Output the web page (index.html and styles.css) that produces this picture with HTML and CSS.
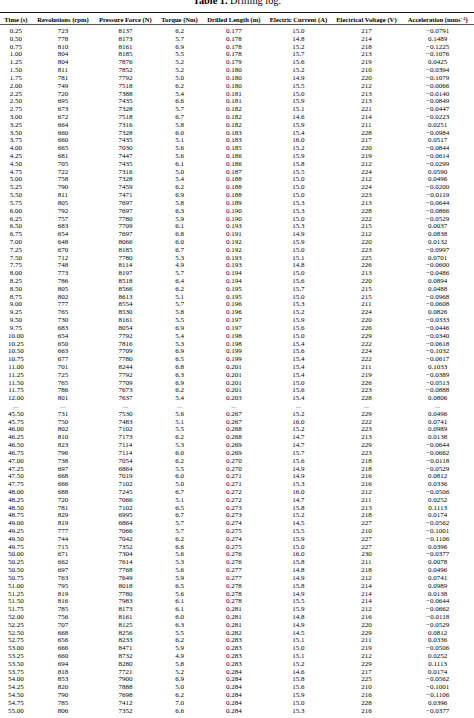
FILE: index.html
```html
<!DOCTYPE html>
<html>
<head>
<meta charset="utf-8">
<link rel="stylesheet" href="styles.css">
</head>
<body>
<div class="caption"><b>Table 1.</b> Drilling log.</div>
<table class="log">
<colgroup>
<col class="c1"><col class="c2"><col class="c3"><col class="c4"><col class="c5"><col class="c6"><col class="c7"><col class="c8">
</colgroup>
<thead>
<tr><th>Time (s)</th><th>Revolutions (rpm)</th><th>Pressure Force (N)</th><th>Torque (Nm)</th><th>Drilled Length (m)</th><th>Electric Current (A)</th><th>Electrical Voltage (V)</th><th>Acceleration (mms<sup>−2</sup>)</th></tr>
</thead>
<tbody>
<tr><td>0.25</td><td>723</td><td>8137</td><td>6.2</td><td>0.177</td><td>15.0</td><td>217</td><td>−0.0791</td></tr>
<tr><td>0.50</td><td>778</td><td>8173</td><td>5.7</td><td>0.178</td><td>14.8</td><td>214</td><td>0.1489</td></tr>
<tr><td>0.75</td><td>810</td><td>8161</td><td>6.9</td><td>0.178</td><td>15.2</td><td>218</td><td>−0.1225</td></tr>
<tr><td>1.00</td><td>804</td><td>8185</td><td>5.5</td><td>0.178</td><td>15.7</td><td>213</td><td>−0.1076</td></tr>
<tr><td>1.25</td><td>804</td><td>7876</td><td>5.2</td><td>0.179</td><td>15.6</td><td>219</td><td>0.0425</td></tr>
<tr><td>1.50</td><td>811</td><td>7852</td><td>5.2</td><td>0.180</td><td>15.2</td><td>210</td><td>−0.0394</td></tr>
<tr><td>1.75</td><td>781</td><td>7792</td><td>5.0</td><td>0.180</td><td>14.9</td><td>220</td><td>−0.1079</td></tr>
<tr><td>2.00</td><td>749</td><td>7518</td><td>6.2</td><td>0.180</td><td>15.5</td><td>212</td><td>−0.0066</td></tr>
<tr><td>2.25</td><td>720</td><td>7388</td><td>5.4</td><td>0.181</td><td>15.0</td><td>213</td><td>−0.0140</td></tr>
<tr><td>2.50</td><td>695</td><td>7435</td><td>6.6</td><td>0.181</td><td>15.9</td><td>213</td><td>−0.0849</td></tr>
<tr><td>2.75</td><td>673</td><td>7328</td><td>5.7</td><td>0.182</td><td>15.1</td><td>221</td><td>−0.0447</td></tr>
<tr><td>3.00</td><td>672</td><td>7518</td><td>6.7</td><td>0.182</td><td>14.6</td><td>214</td><td>−0.0223</td></tr>
<tr><td>3.25</td><td>664</td><td>7316</td><td>5.8</td><td>0.182</td><td>15.9</td><td>211</td><td>0.0251</td></tr>
<tr><td>3.50</td><td>660</td><td>7328</td><td>6.0</td><td>0.183</td><td>15.4</td><td>228</td><td>−0.0984</td></tr>
<tr><td>3.75</td><td>660</td><td>7435</td><td>5.1</td><td>0.183</td><td>16.0</td><td>217</td><td>0.0517</td></tr>
<tr><td>4.00</td><td>665</td><td>7030</td><td>5.6</td><td>0.185</td><td>15.2</td><td>220</td><td>−0.0844</td></tr>
<tr><td>4.25</td><td>681</td><td>7447</td><td>5.6</td><td>0.186</td><td>15.9</td><td>219</td><td>−0.0614</td></tr>
<tr><td>4.50</td><td>705</td><td>7435</td><td>6.1</td><td>0.186</td><td>15.8</td><td>212</td><td>−0.0299</td></tr>
<tr><td>4.75</td><td>722</td><td>7316</td><td>5.0</td><td>0.187</td><td>15.5</td><td>224</td><td>0.0590</td></tr>
<tr><td>5.00</td><td>758</td><td>7328</td><td>5.4</td><td>0.188</td><td>15.0</td><td>212</td><td>0.0496</td></tr>
<tr><td>5.25</td><td>790</td><td>7459</td><td>6.2</td><td>0.188</td><td>15.0</td><td>224</td><td>−0.0200</td></tr>
<tr><td>5.50</td><td>811</td><td>7471</td><td>6.9</td><td>0.188</td><td>15.0</td><td>223</td><td>−0.0119</td></tr>
<tr><td>5.75</td><td>805</td><td>7697</td><td>5.8</td><td>0.189</td><td>15.3</td><td>213</td><td>−0.0644</td></tr>
<tr><td>6.00</td><td>792</td><td>7697</td><td>6.3</td><td>0.190</td><td>15.3</td><td>228</td><td>−0.0866</td></tr>
<tr><td>6.25</td><td>757</td><td>7780</td><td>5.9</td><td>0.190</td><td>15.0</td><td>222</td><td>−0.0529</td></tr>
<tr><td>6.50</td><td>683</td><td>7709</td><td>6.1</td><td>0.193</td><td>15.3</td><td>215</td><td>0.0037</td></tr>
<tr><td>6.75</td><td>654</td><td>7697</td><td>6.8</td><td>0.191</td><td>14.9</td><td>212</td><td>0.0838</td></tr>
<tr><td>7.00</td><td>648</td><td>8066</td><td>6.0</td><td>0.192</td><td>15.9</td><td>220</td><td>0.0132</td></tr>
<tr><td>7.25</td><td>670</td><td>8185</td><td>6.7</td><td>0.192</td><td>15.0</td><td>223</td><td>−0.0997</td></tr>
<tr><td>7.50</td><td>712</td><td>7780</td><td>5.3</td><td>0.193</td><td>15.1</td><td>225</td><td>0.0701</td></tr>
<tr><td>7.75</td><td>748</td><td>8114</td><td>4.9</td><td>0.193</td><td>14.8</td><td>226</td><td>−0.0600</td></tr>
<tr><td>8.00</td><td>773</td><td>8197</td><td>5.7</td><td>0.194</td><td>15.0</td><td>213</td><td>−0.0486</td></tr>
<tr><td>8.25</td><td>786</td><td>8518</td><td>6.4</td><td>0.194</td><td>15.6</td><td>220</td><td>0.0894</td></tr>
<tr><td>8.50</td><td>805</td><td>8566</td><td>6.2</td><td>0.195</td><td>15.7</td><td>215</td><td>0.0488</td></tr>
<tr><td>8.75</td><td>802</td><td>8613</td><td>5.1</td><td>0.195</td><td>15.0</td><td>215</td><td>−0.0968</td></tr>
<tr><td>9.00</td><td>777</td><td>8554</td><td>5.7</td><td>0.196</td><td>15.3</td><td>211</td><td>−0.0608</td></tr>
<tr><td>9.25</td><td>765</td><td>8530</td><td>5.8</td><td>0.196</td><td>15.2</td><td>224</td><td>0.0826</td></tr>
<tr><td>9.50</td><td>730</td><td>8161</td><td>5.5</td><td>0.197</td><td>15.9</td><td>220</td><td>−0.0333</td></tr>
<tr><td>9.75</td><td>683</td><td>8054</td><td>6.9</td><td>0.197</td><td>15.6</td><td>226</td><td>−0.0446</td></tr>
<tr><td>10.00</td><td>654</td><td>7792</td><td>5.4</td><td>0.198</td><td>15.0</td><td>229</td><td>−0.0340</td></tr>
<tr><td>10.25</td><td>650</td><td>7816</td><td>5.3</td><td>0.198</td><td>15.4</td><td>222</td><td>−0.0618</td></tr>
<tr><td>10.50</td><td>663</td><td>7709</td><td>6.9</td><td>0.199</td><td>15.6</td><td>224</td><td>−0.1032</td></tr>
<tr><td>10.75</td><td>677</td><td>7780</td><td>6.5</td><td>0.199</td><td>15.4</td><td>222</td><td>−0.0617</td></tr>
<tr><td>11.00</td><td>701</td><td>8244</td><td>6.8</td><td>0.201</td><td>15.4</td><td>211</td><td>0.1033</td></tr>
<tr><td>11.25</td><td>725</td><td>7792</td><td>6.3</td><td>0.201</td><td>15.4</td><td>219</td><td>−0.0389</td></tr>
<tr><td>11.50</td><td>765</td><td>7709</td><td>6.9</td><td>0.201</td><td>15.0</td><td>226</td><td>−0.0513</td></tr>
<tr><td>11.75</td><td>786</td><td>7673</td><td>6.2</td><td>0.201</td><td>15.6</td><td>223</td><td>−0.0888</td></tr>
<tr><td>12.00</td><td>801</td><td>7637</td><td>5.4</td><td>0.203</td><td>15.4</td><td>228</td><td>0.0806</td></tr>
<tr class="gap"><td>...</td><td>...</td><td>...</td><td>...</td><td>...</td><td>...</td><td>...</td><td>...</td></tr>
<tr><td>45.50</td><td>731</td><td>7530</td><td>5.6</td><td>0.267</td><td>15.2</td><td>229</td><td>0.0496</td></tr>
<tr><td>45.75</td><td>750</td><td>7483</td><td>5.1</td><td>0.267</td><td>16.0</td><td>222</td><td>0.0741</td></tr>
<tr><td>46.00</td><td>802</td><td>7102</td><td>5.5</td><td>0.268</td><td>15.2</td><td>223</td><td>0.0989</td></tr>
<tr><td>46.25</td><td>810</td><td>7173</td><td>6.2</td><td>0.268</td><td>14.7</td><td>213</td><td>0.0138</td></tr>
<tr><td>46.50</td><td>823</td><td>7114</td><td>5.3</td><td>0.269</td><td>14.7</td><td>229</td><td>−0.0644</td></tr>
<tr><td>46.75</td><td>796</td><td>7114</td><td>6.0</td><td>0.269</td><td>15.7</td><td>223</td><td>−0.0662</td></tr>
<tr><td>47.00</td><td>738</td><td>7054</td><td>6.2</td><td>0.270</td><td>15.6</td><td>218</td><td>−0.0118</td></tr>
<tr><td>47.25</td><td>697</td><td>6864</td><td>5.5</td><td>0.270</td><td>14.9</td><td>218</td><td>−0.0529</td></tr>
<tr><td>47.50</td><td>668</td><td>7019</td><td>6.0</td><td>0.271</td><td>14.9</td><td>216</td><td>0.0812</td></tr>
<tr><td>47.75</td><td>666</td><td>7102</td><td>5.0</td><td>0.271</td><td>15.3</td><td>216</td><td>0.0336</td></tr>
<tr><td>48.00</td><td>688</td><td>7245</td><td>6.7</td><td>0.272</td><td>16.0</td><td>212</td><td>−0.0506</td></tr>
<tr><td>48.25</td><td>720</td><td>7066</td><td>5.1</td><td>0.272</td><td>14.7</td><td>211</td><td>0.0252</td></tr>
<tr><td>48.50</td><td>781</td><td>7102</td><td>6.5</td><td>0.273</td><td>15.8</td><td>213</td><td>0.1113</td></tr>
<tr><td>48.75</td><td>829</td><td>6995</td><td>6.7</td><td>0.273</td><td>15.2</td><td>218</td><td>0.0174</td></tr>
<tr><td>49.00</td><td>819</td><td>6864</td><td>5.7</td><td>0.274</td><td>14.5</td><td>227</td><td>−0.0562</td></tr>
<tr><td>49.25</td><td>777</td><td>7066</td><td>5.7</td><td>0.275</td><td>15.5</td><td>210</td><td>−0.1001</td></tr>
<tr><td>49.50</td><td>744</td><td>7042</td><td>6.2</td><td>0.274</td><td>15.9</td><td>227</td><td>−0.1106</td></tr>
<tr><td>49.75</td><td>715</td><td>7352</td><td>6.6</td><td>0.275</td><td>15.0</td><td>227</td><td>0.0396</td></tr>
<tr><td>50.00</td><td>671</td><td>7304</td><td>5.6</td><td>0.276</td><td>16.0</td><td>230</td><td>−0.0377</td></tr>
<tr><td>50.25</td><td>662</td><td>7614</td><td>5.3</td><td>0.276</td><td>15.8</td><td>211</td><td>0.0078</td></tr>
<tr><td>50.50</td><td>697</td><td>7768</td><td>5.6</td><td>0.277</td><td>14.8</td><td>218</td><td>0.0496</td></tr>
<tr><td>50.75</td><td>763</td><td>7649</td><td>5.9</td><td>0.277</td><td>14.9</td><td>212</td><td>0.0741</td></tr>
<tr><td>51.00</td><td>795</td><td>8018</td><td>6.5</td><td>0.278</td><td>15.8</td><td>214</td><td>0.0989</td></tr>
<tr><td>51.25</td><td>819</td><td>7780</td><td>5.6</td><td>0.278</td><td>14.9</td><td>214</td><td>0.0138</td></tr>
<tr><td>51.50</td><td>816</td><td>7983</td><td>6.1</td><td>0.278</td><td>15.5</td><td>214</td><td>−0.0644</td></tr>
<tr><td>51.75</td><td>785</td><td>8173</td><td>6.1</td><td>0.281</td><td>15.9</td><td>212</td><td>−0.0662</td></tr>
<tr><td>52.00</td><td>756</td><td>8161</td><td>6.0</td><td>0.281</td><td>14.8</td><td>216</td><td>−0.0118</td></tr>
<tr><td>52.25</td><td>707</td><td>8125</td><td>6.3</td><td>0.281</td><td>14.9</td><td>220</td><td>−0.0529</td></tr>
<tr><td>52.50</td><td>668</td><td>8256</td><td>5.5</td><td>0.282</td><td>14.5</td><td>229</td><td>0.0812</td></tr>
<tr><td>52.75</td><td>656</td><td>8233</td><td>6.2</td><td>0.283</td><td>15.1</td><td>211</td><td>0.0336</td></tr>
<tr><td>53.00</td><td>666</td><td>8471</td><td>5.9</td><td>0.283</td><td>15.0</td><td>219</td><td>−0.0506</td></tr>
<tr><td>53.25</td><td>660</td><td>8732</td><td>4.9</td><td>0.283</td><td>15.1</td><td>212</td><td>0.0252</td></tr>
<tr><td>53.50</td><td>694</td><td>8280</td><td>5.8</td><td>0.283</td><td>15.2</td><td>229</td><td>0.1113</td></tr>
<tr><td>53.75</td><td>818</td><td>7721</td><td>5.2</td><td>0.284</td><td>14.6</td><td>217</td><td>0.0174</td></tr>
<tr><td>54.00</td><td>853</td><td>7900</td><td>6.9</td><td>0.284</td><td>15.8</td><td>225</td><td>−0.0562</td></tr>
<tr><td>54.25</td><td>820</td><td>7888</td><td>5.0</td><td>0.284</td><td>15.6</td><td>210</td><td>−0.1001</td></tr>
<tr><td>54.50</td><td>790</td><td>7698</td><td>6.2</td><td>0.284</td><td>15.9</td><td>216</td><td>−0.1106</td></tr>
<tr><td>54.75</td><td>785</td><td>7412</td><td>7.0</td><td>0.284</td><td>15.0</td><td>228</td><td>0.0396</td></tr>
<tr><td>55.00</td><td>806</td><td>7352</td><td>6.6</td><td>0.284</td><td>15.3</td><td>216</td><td>−0.0377</td></tr>
</tbody>
</table>
</body>
</html>
```
FILE: styles.css
```css
html, body {
  margin: 0;
  padding: 0;
  background: #fff;
}
body {
  font-family: "Liberation Serif", "DejaVu Serif", serif;
  color: #000;
  overflow: hidden;
  width: 474px;
}
.caption {
  text-align: center;
  font-size: 10.3px;
  line-height: 10px;
  height: 10px;
  margin-top: -4px;
  white-space: nowrap;
}
.caption b {
  font-weight: bold;
}
.log {
  width: 474px;
  table-layout: fixed;
  border-collapse: collapse;
  margin-top: 6px;
  font-size: 7px;
  border-top: 1px solid #111;
}
.c1 { width: 31.8px; }
.c2 { width: 62.2px; }
.c3 { width: 62.7px; }
.c4 { width: 45.6px; }
.c5 { width: 63px; }
.c6 { width: 66px; }
.c7 { width: 69.9px; }
.c8 { width: 72.6px; }
.log th {
  font-weight: bold;
  font-size: 6.6px;
  text-align: center;
  white-space: nowrap;
  padding: 3px 0 0 0;
  line-height: 8px;
  height: 8px;
  border-bottom: 1px solid #555;
}
.log th sup {
  font-size: 4.5px;
  line-height: 0;
  vertical-align: 2.5px;
}
.log td {
  text-align: center;
  white-space: nowrap;
  padding: 0;
  line-height: 7.82px;
  height: 7.82px;
}
.log tbody tr:first-child td {
  padding-top: 3px;
}
.log .gap td {
  color: #666;
}
```
